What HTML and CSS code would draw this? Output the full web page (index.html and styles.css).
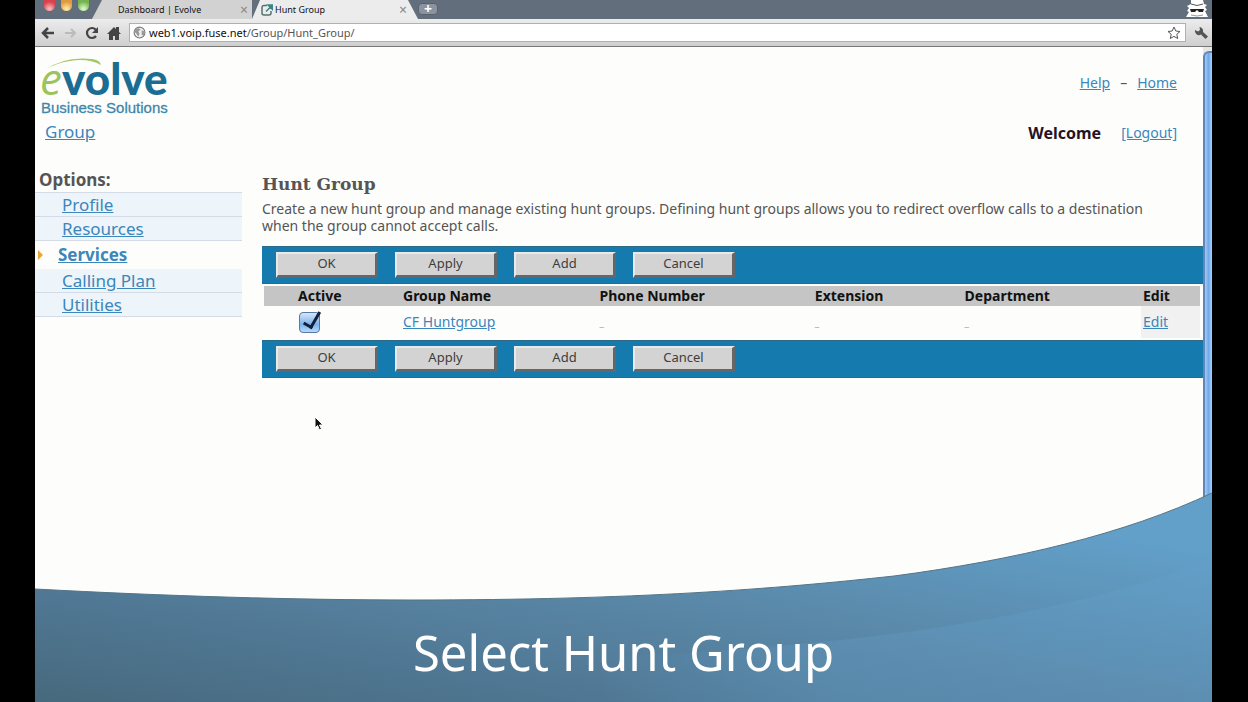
FILE: index.html
```html
<!DOCTYPE html>
<html lang="en">
<head>
    <meta charset="UTF-8">
    <meta name="viewport" content="width=device-width, initial-scale=1.0">
    <title>Hunt Group</title>
    <link rel="stylesheet" href="styles.css">
</head>
<body>
    <div class="stage">
        <div class="tab-strip">
            <div class="lights">
                <span class="light red"></span>
                <span class="light yellow"></span>
                <span class="light green"></span>
            </div>
            <div class="tab">
                <span class="tab-title">Dashboard | Evolve</span>
                <button class="tab-close" aria-label="Close Dashboard tab">×</button>
            </div>
            <div class="tab active">
                <svg class="favicon" viewBox="0 0 12 12" aria-hidden="true">
                    <path d="M6 1.5H3A2 2 0 0 0 1 3.500V9a2 2 0 0 0 2 2h5a2 2 0 0 0 2-2V7" fill="none" stroke="#58706d" stroke-width="1.500"/>
                    <path d="M5 7.500L9.500 3M7 1h4.500v4.500z" fill="#3d8583" stroke="#3d8583" stroke-width="1.500"/>
                </svg>
                <span class="tab-title">Hunt Group</span>
                <button class="tab-close" aria-label="Close Hunt Group tab">×</button>
            </div>
            <button class="new-tab" aria-label="New tab">+</button>
            <svg class="incognito" viewBox="0 0 22 18" aria-hidden="true">
                <path d="M5 0h12l1 4 3 1-2 2 2 3-2 1 3 6H0l3-5-2-1 2-3-2-2 4-2z" fill="#fff"/>
                <path d="M5 4q6 3 12 0" fill="none" stroke="#555" stroke-width="1"/>
                <path d="M4 9h14l-1 3h-4l-2-2-2 2H5z" fill="#222"/>
                <path d="M5 15q6 2 12 0" fill="none" stroke="#999" stroke-width="1"/>
            </svg>
        </div>

        <div class="toolbar">
            <button class="tool" aria-label="Back">
                <svg viewBox="0 0 14 14"><path d="M13 7H2M7 2L2 7l5 5" fill="none" stroke="#444" stroke-width="2.500"/></svg>
            </button>
            <button class="tool" aria-label="Forward">
                <svg viewBox="0 0 14 14"><path d="M2 7h10M8 3l4 4-4 4" fill="none" stroke="#bbb" stroke-width="2"/></svg>
            </button>
            <button class="tool" aria-label="Reload">
                <svg viewBox="0 0 14 14"><path d="M11 10A5 5 0 1 1 11 4" fill="none" stroke="#444" stroke-width="2.200"/><path d="M13 1v6H7z" fill="#444"/></svg>
            </button>
            <button class="tool" aria-label="Home page">
                <svg viewBox="0 0 14 14"><path d="M7 1l2 2V1h3v5l2 2h-2v6H8v-4H6v4H2V8H0z" fill="#444"/></svg>
            </button>
            <div class="address">
                <svg class="globe" viewBox="0 0 12 12" aria-hidden="true">
                    <circle cx="6" cy="6" r="5" fill="#eee" stroke="#777"/>
                    <path d="M2 3l3-1 2 1-2 2 1 2-1 3-2-3-2-2zM8 4l3 1-1 4-2-1z" fill="#999"/>
                </svg>
                <span class="url"><span class="host">web1.voip.fuse.net</span>/Group/Hunt_Group/</span>
                <svg class="star" viewBox="0 0 14 14" aria-hidden="true">
                    <path d="M7 1l1.800 4 4.200.500-3.200 2.800.900 4.200L7 10.400l-3.700 2.100.900-4.200L1 5.500 5.200 5z" fill="#fff" stroke="#555" stroke-width="1"/>
                </svg>
            </div>
            <button class="tool" aria-label="Settings">
                <svg viewBox="0 0 14 14"><path d="M5.500 1A4 4 0 0 1 9 6l5 4.500-2.500 2.500L7 8.500A4 4 0 0 1 1 4l3 1.500L6 4z" fill="#555"/></svg>
            </button>
        </div>

        <div class="viewport">
            <div class="page">
                <header class="header">
                    <div class="brand">
                        <svg class="logo" viewBox="0 0 130 60" role="img" aria-label="evolve Business Solutions">
                            <text class="logo-e" x="0" y="40">e</text>
                            <text class="logo-name" x="22" y="40">volve</text>
                            <path d="M5 15Q24 1 52 4Q60 5 61 10Q48 3 30 6Q16 8 5 15z" fill="#a3c767"/>
                            <text class="logo-tag" x="1" y="58">Business Solutions</text>
                        </svg>
                        <a class="crumb" href="#">Group</a>
                    </div>
                    <div class="account">
                        <nav class="top-links"><a href="#">Help</a><span>–</span><a href="#">Home</a></nav>
                        <div class="session"><strong>Welcome</strong><a href="#">[Logout]</a></div>
                    </div>
                </header>

                <div class="columns">
                    <nav class="sidebar">
                        <h2>Options:</h2>
                        <ul>
                            <li><a href="#">Profile</a></li>
                            <li><a href="#">Resources</a></li>
                            <li class="current"><a href="#">Services</a></li>
                            <li><a href="#">Calling Plan</a></li>
                            <li><a href="#">Utilities</a></li>
                        </ul>
                    </nav>

                    <main class="content">
                        <h1>Hunt Group</h1>
                        <p>Create a new hunt group and manage existing hunt groups. Defining hunt groups allows you to redirect overflow calls to a destination when the group cannot accept calls.</p>

                        <div class="button-bar">
                            <button>OK</button>
                            <button>Apply</button>
                            <button>Add</button>
                            <button>Cancel</button>
                        </div>

                        <div class="table-wrap">
                            <table>
                                <thead>
                                    <tr>
                                        <th class="col-active">Active</th>
                                        <th class="col-name">Group Name</th>
                                        <th class="col-phone">Phone Number</th>
                                        <th class="col-ext">Extension</th>
                                        <th class="col-dept">Department</th>
                                        <th class="col-edit">Edit</th>
                                    </tr>
                                </thead>
                                <tbody>
                                    <tr>
                                        <td class="col-active"><input type="checkbox" aria-label="Active" checked></td>
                                        <td><a href="#">CF Huntgroup</a></td>
                                        <td class="empty">_</td>
                                        <td class="empty">_</td>
                                        <td class="empty">_</td>
                                        <td class="edit-cell"><a href="#">Edit</a></td>
                                    </tr>
                                </tbody>
                            </table>
                        </div>

                        <div class="button-bar">
                            <button>OK</button>
                            <button>Apply</button>
                            <button>Add</button>
                            <button>Cancel</button>
                        </div>
                    </main>
                </div>
            </div>
            <div class="scroll-track"><div class="scroll-thumb"></div></div>
        </div>

        <svg class="cursor" viewBox="0 0 10 15" aria-hidden="true">
            <path d="M1 1v11l2.500-2.500L5.500 14l2-1-2-4H9z" fill="#111" stroke="#fff" stroke-width="1"/>
        </svg>

        <div class="banner">
            <svg class="wave" viewBox="0 0 1177 210" preserveAspectRatio="none" aria-hidden="true">
                <defs>
                    <linearGradient id="sea" gradientUnits="userSpaceOnUse" x1="0" y1="210" x2="66" y2="-148">
                        <stop offset="0" stop-color="#47697d"/>
                        <stop offset="0.300" stop-color="#507894"/>
                        <stop offset="0.600" stop-color="#5a88a8"/>
                        <stop offset="1" stop-color="#62a0ca"/>
                    </linearGradient>
                    <linearGradient id="swell" x1="0" y1="0" x2="1" y2="0">
                        <stop offset="0" stop-color="#64a0cc" stop-opacity="0"/>
                        <stop offset="0.400" stop-color="#64a0cc" stop-opacity="0.300"/>
                        <stop offset="1" stop-color="#64a0cc" stop-opacity="0.300"/>
                    </linearGradient>
                </defs>
                <path d="M0 97C130 104 260 108 378 108C600 108 740 97 859 84C980 68 1090 42 1177 1V210H0z" fill="url(#sea)"/>
                <path d="M560 165C700 160 850 147 965 125C1050 109 1120 90 1177 66V210H560z" fill="url(#swell)"/>
                <path d="M0 97C130 104 260 108 378 108C600 108 740 97 859 84C980 68 1090 42 1177 1" fill="none" stroke="#547486" stroke-width="1"/>
            </svg>
            <div class="caption">Select Hunt Group</div>
        </div>
    </div>
</body>
</html>
```
FILE: styles.css
```css
* {
    box-sizing: border-box;
}

body {
    margin: 0;
    padding: 0 36px 0 35px;
    background-color: #000;
    font-family: "Noto Sans", "Open Sans", sans-serif;
    color: #555;
}

a {
    color: #3b86bb;
    text-decoration: underline;
}

button {
    font-family: inherit;
    cursor: pointer;
}

.stage {
    position: relative;
    display: flex;
    flex-direction: column;
    min-height: 100vh;
    overflow: hidden;
    background-color: #fdfefc;
}

/* browser frame */
.tab-strip {
    display: flex;
    height: 19px;
    background-color: #636e7c;
}

.lights {
    display: flex;
    gap: 6px;
    padding: 0 3px 0 9px;
}

.light {
    width: 11px;
    height: 11px;
    border-radius: 0 0 6px 6px;
}

.red {
    background: radial-gradient(circle at 50% 80%, #ffc0c0, #d8414e 70%);
}

.yellow {
    background: radial-gradient(circle at 50% 80%, #ffedb0, #e09a3c 70%);
}

.green {
    background: radial-gradient(circle at 50% 80%, #e0ffc8, #74b350 70%);
}

.tab {
    display: flex;
    align-items: center;
    width: 160px;
    padding: 0 4px 0 26px;
    background-color: #d2d2d2;
    clip-path: polygon(10px 0, 100% 0, 100% 100%, 0 100%);
    color: #111;
    font-size: 9px;
}

.tab.active {
    width: 166px;
    gap: 2px;
    padding: 0 11px 0 9px;
    background-color: #ececec;
    clip-path: polygon(8px 0, 156px 0, 100% 100%, 0 100%);
}

.tab-close {
    margin-left: auto;
    padding: 0;
    border: none;
    background: none;
    color: #888;
    font-size: 14px;
    line-height: 18px;
}

.favicon {
    width: 12px;
    height: 12px;
}

.new-tab {
    width: 20px;
    height: 12px;
    margin-top: 3px;
    padding: 0;
    border: 1px solid #596370;
    border-radius: 4px;
    background-color: #8a939e;
    color: #fff;
    font-size: 14px;
    font-weight: bold;
    line-height: 10px;
}

.incognito {
    width: 22px;
    height: 18px;
    margin-left: auto;
    margin-right: 4px;
}

.toolbar {
    display: flex;
    align-items: center;
    gap: 8px;
    height: 28px;
    padding: 0 4px 0 6px;
    background: linear-gradient(#ececec, #cfcfcf);
    border-bottom: 1px solid #777;
}

.tool {
    width: 14px;
    height: 14px;
    padding: 0;
    border: none;
    background: none;
}

.tool svg {
    display: block;
}

.address {
    display: flex;
    flex: 1;
    align-items: center;
    gap: 3px;
    height: 19px;
    padding: 0 4px 0 3px;
    border: 1px solid #b0b0b0;
    background-color: #fff;
    font-size: 11px;
}

.globe {
    width: 13px;
    height: 13px;
}

.host {
    color: #111;
}

.star {
    width: 14px;
    height: 14px;
    margin-left: auto;
}

/* web page */
.viewport {
    display: flex;
    flex: 1;
}

.page {
    flex: 1;
}

.scroll-track {
    width: 9px;
    padding-top: 4px;
    background-color: #e6e6e6;
}

.scroll-thumb {
    height: 100%;
    border: 2px solid #5f86b6;
    border-right: none;
    border-radius: 6px 0 0 0;
    background: linear-gradient(90deg, #a9c9f4, #6fabec 50%, #a8d2fa);
}

.header {
    display: flex;
    justify-content: space-between;
    padding: 8px 26px 0 5px;
    font-size: 14px;
}

.logo {
    display: block;
    width: 130px;
    height: 60px;
    overflow: visible;
}

.logo-e {
    fill: #9cc45c;
    font: italic 44px "Open Sans", sans-serif;
}

.logo-name {
    fill: #1c6d93;
    font: 900 44px Lato, sans-serif;
}

.logo-tag {
    fill: #3d87ac;
    stroke: #3d87ac;
    stroke-width: 0.3px;
    font: 15px "Liberation Sans", sans-serif;
}

.crumb {
    display: inline-block;
    padding-left: 5px;
    font-size: 17px;
    line-height: 34px;
}

.account {
    display: flex;
    flex-direction: column;
    gap: 30px;
    padding-top: 18px;
    line-height: 20px;
}

.top-links {
    display: flex;
    justify-content: flex-end;
    gap: 10px;
}

.session {
    display: flex;
    align-items: center;
    gap: 20px;
}

.session strong {
    color: #251325;
    font-size: 16px;
}

.columns {
    display: flex;
    gap: 20px;
}

.sidebar {
    width: 207px;
    padding-top: 18px;
    font-size: 17px;
}

.sidebar h2 {
    margin: 0;
    padding-left: 4px;
    font-size: 17px;
    line-height: 25px;
}

.sidebar ul {
    margin: 0;
    padding: 0;
    border-top: 1px solid #d5dbe6;
    list-style: none;
}

.sidebar li {
    padding-left: 27px;
    border-bottom: 1px solid #d5dbe6;
    background-color: #edf4fa;
    line-height: 23px;
}

.sidebar .current {
    display: flex;
    align-items: center;
    gap: 15px;
    padding-left: 3px;
    border-bottom: none;
    background: none;
    font-weight: bold;
    line-height: 28px;
}

.current::before {
    content: "";
    border: 5px solid transparent;
    border-left: 5px solid #e8a53a;
    border-right: none;
}

.content {
    flex: 1;
    padding-top: 23px;
}

.content h1 {
    margin: 0;
    font-family: "DejaVu Serif", serif;
    font-size: 17px;
    line-height: 24px;
}

.content p {
    margin: 0 0 12px;
    padding: 4px 30px 0 0;
    font-size: 14px;
    line-height: 17px;
}

.button-bar {
    display: flex;
    gap: 17px;
    padding: 5px 14px;
    border-top: 1px solid #2d6a85;
    border-bottom: 1px solid #2d6a85;
    background-color: #157bae;
}

.button-bar button {
    width: 102px;
    height: 26px;
    padding: 0 0 3px;
    border: 2px solid #e9e9e9;
    border-right: 3px solid #666;
    border-bottom: 3px solid #666;
    background-color: #d3d3d3;
    color: #3d3d3d;
    font-size: 13px;
    line-height: 18px;
}

.table-wrap {
    padding: 2px 3px 2px 2px;
}

table {
    width: 100%;
    border-collapse: collapse;
    table-layout: fixed;
    font-size: 14px;
}

th {
    height: 20px;
    padding: 0 2px;
    background-color: #c5c5c5;
    color: #111;
    line-height: 20px;
    text-align: left;
}

td {
    height: 32px;
    padding: 0 2px;
    line-height: 20px;
}

th.col-active,
td.col-active {
    padding-left: 34px;
}

.col-active { width: 137px; }
.col-name { width: 21%; }
.col-phone { width: 23%; }
.col-ext { width: 16%; }
.col-edit { width: 59px; }

.empty {
    color: #aaa;
    font-size: 10px;
}

.edit-cell {
    background-color: #f1f1f1;
}

input[type="checkbox"] {
    display: block;
    width: 21px;
    height: 21px;
    margin: 0 0 0 1px;
    appearance: none;
    border: 1px solid #5878a4;
    border-radius: 4px;
    background: linear-gradient(#d5e6fa, #7db2ec 60%, #b4dbfa);
}

input[type="checkbox"]:checked::after {
    content: "";
    display: block;
    width: 7px;
    height: 16px;
    margin: -4px 0 0 7px;
    border-right: 3px solid #14203a;
    border-bottom: 3px solid #14203a;
    transform: rotate(30deg);
}

/* things lying over the page */
.cursor {
    position: absolute;
    left: 279px;
    top: 416px;
    width: 10px;
    height: 15px;
}

.banner {
    position: absolute;
    left: 0;
    right: 0;
    bottom: 0;
    display: grid;
    height: 210px;
}

.wave,
.caption {
    grid-area: 1 / 1;
    width: 100%;
}

.wave {
    height: 100%;
}

.caption {
    align-self: end;
    padding-bottom: 16px;
    color: #fff;
    font-size: 49px;
    line-height: 68px;
    text-align: center;
    z-index: 1;
}
```
